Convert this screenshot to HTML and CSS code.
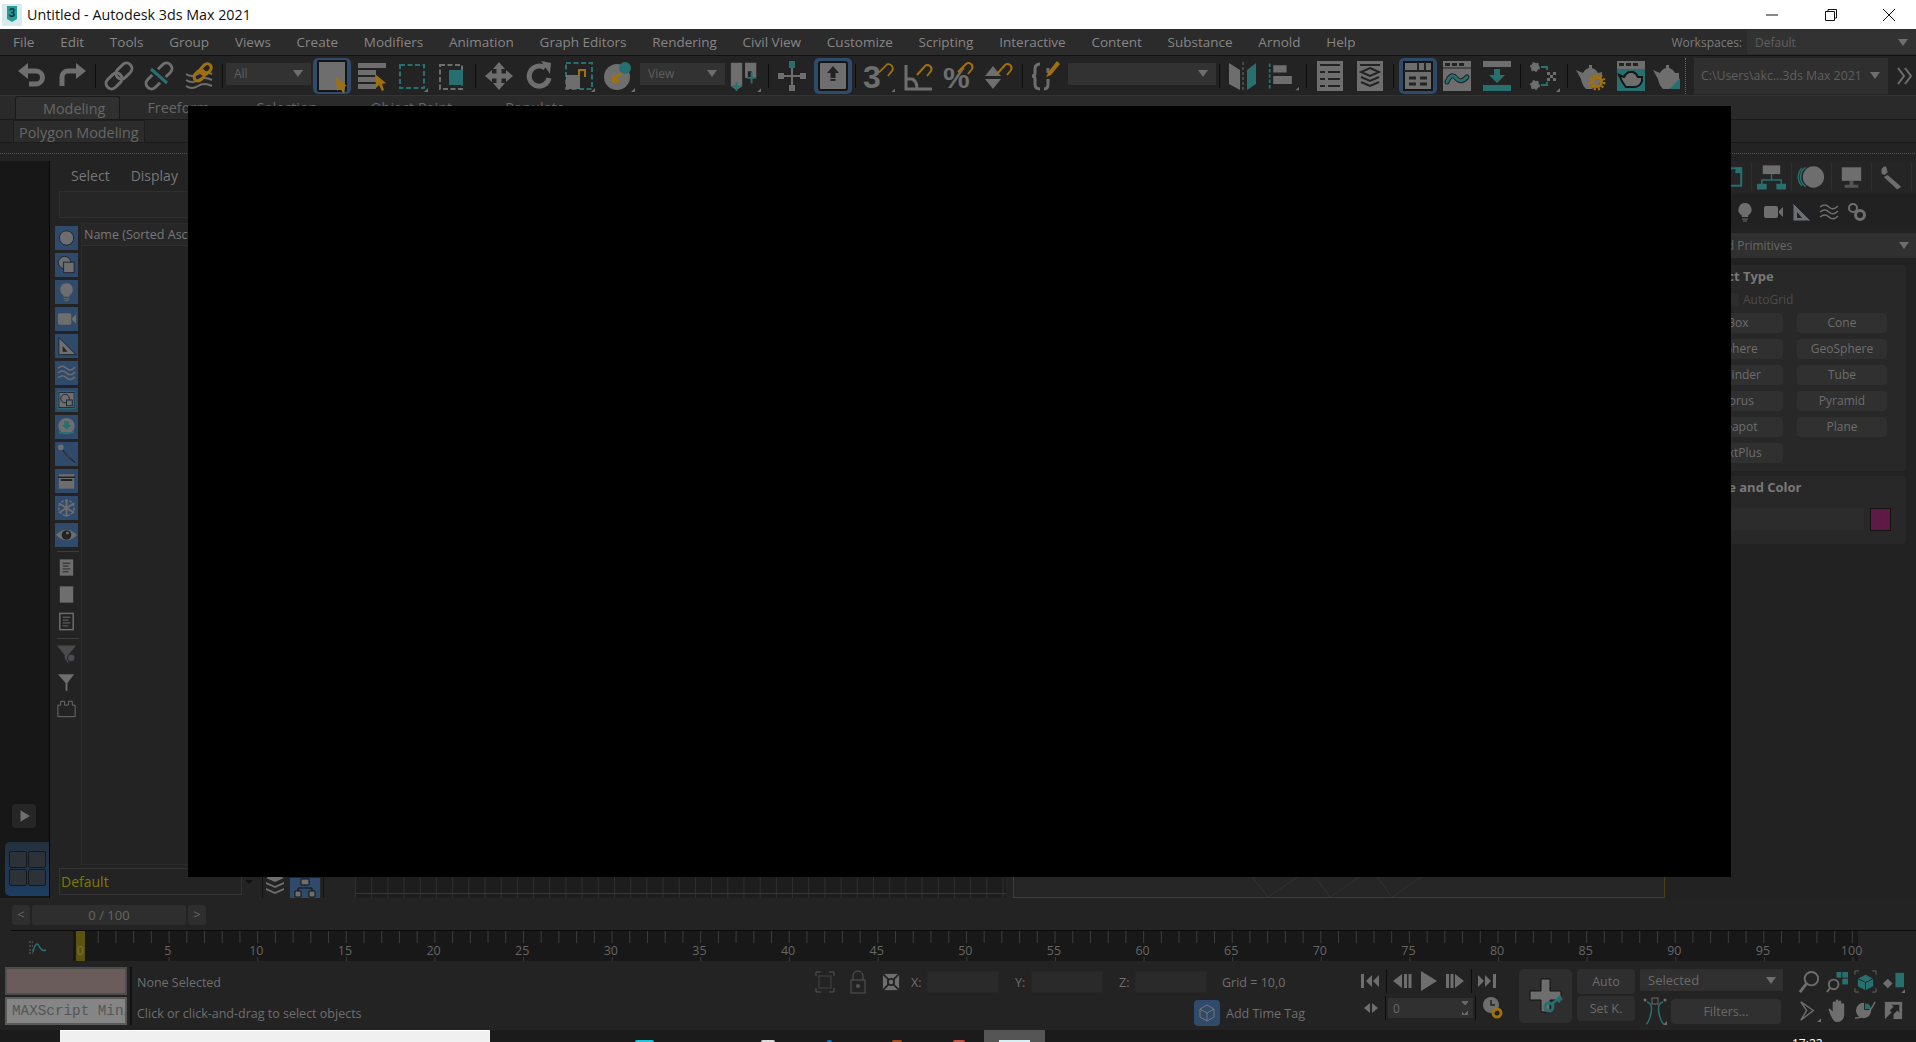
FILE: index.html
```html
<!DOCTYPE html>
<html lang="en">

<head>
    <meta charset="UTF-8">
    <title>Untitled - Autodesk 3ds Max 2021</title>
    <link rel="stylesheet" href="styles.css">
</head>

<body>
    <svg class="defs" xmlns="http://www.w3.org/2000/svg">
        <symbol id="i-undo" viewBox="0 0 32 32"><path class="sg w5" d="M12 11H20a6.5 6.5 0 0 1 0 13H13"/><path class="g" d="M2 11 12 3V19Z"/></symbol>
        <symbol id="i-redo" viewBox="0 0 32 32"><path class="sg w5" d="M6 26V17a6 6 0 0 1 6-6H20"/><path class="g" d="M30 11 20 3V19Z"/></symbol>
        <symbol id="i-link" viewBox="0 0 32 32"><g class="sg w3" transform="rotate(-45 16 16)"><rect x="0" y="10.500" width="18" height="11" rx="5.500"/><rect x="14" y="10.500" width="18" height="11" rx="5.500"/></g></symbol>
        <symbol id="i-unlink" viewBox="0 0 32 32"><g class="sg w3" transform="rotate(-45 16 16)"><path d="M12 10.500H5.500a5.500 5.500 0 0 0 0 11H12"/><path d="M20 10.500H26.500a5.500 5.500 0 0 1 0 11H20"/></g><path class="st w3" d="M8 9 24 23"/></symbol>
        <symbol id="i-bind" viewBox="0 0 32 32"><path class="sg w2" d="M3 14q6 4 12 0t14 0M3 20q6 4 12 0t14 0M3 26q6 4 12 0t14 0"/><g class="so w3" transform="rotate(-45 20 12)"><rect x="9" y="8" width="12" height="8" rx="4"/><rect x="18" y="8" width="12" height="8" rx="4"/></g></symbol>
        <symbol id="i-select" viewBox="0 0 36 36"><rect class="g dk" x="4" y="3" width="28" height="30" rx="1"/><path class="o" d="M22 19 23 33 26 30 29 35 31 34 29 29 33 28Z"/></symbol>
        <symbol id="i-selname" viewBox="0 0 32 32"><path class="g" d="M2 3H30V8H2ZM2 10H20V15H2ZM2 17H20V22H2ZM2 24H20V29H2Z"/><path class="o" d="M19 14 20 28 23 25 26 31 28 30 26 24 30 23Z"/></symbol>
        <symbol id="i-rect" viewBox="0 0 32 32"><rect class="st w2 dash" x="4" y="5" width="24" height="23"/><path class="g" d="M32 32V28L28 32Z"/></symbol>
        <symbol id="i-window" viewBox="0 0 32 32"><rect class="sg w2 dash" x="4" y="5" width="22" height="24"/><rect class="t" x="13" y="10" width="14" height="15"/></symbol>
        <symbol id="i-move" viewBox="0 0 32 32"><path class="g" d="M16 2 22 9H18.500V13.500H23V10L30 16 23 22V18.500H18.500V23H22L16 30 10 23H13.500V18.500H9V22L2 16 9 10V13.500H13.500V9H10Z"/></symbol>
        <symbol id="i-rotate" viewBox="0 0 32 32"><path class="sg w5" d="M22 8A10 10 0 1 0 26 18"/><path class="g" d="M18 1 28 3 27 14Z"/></symbol>
        <symbol id="i-scale" viewBox="0 0 32 32"><rect class="st w2 dash" x="3" y="3" width="26" height="26"/><rect class="g" x="3" y="15" width="14" height="14"/><path class="o" d="M15 15V9H23V17H21V11H17V15Z"/><path class="g" d="M32 32V28L28 32Z"/></symbol>
        <symbol id="i-place" viewBox="0 0 32 32"><circle class="g" cx="14" cy="17" r="13"/><circle class="t" cx="22" cy="8" r="6"/><path class="so w3" d="M10 21 18 13M10 15V21H16"/><path class="g" d="M32 32V28L28 32Z"/></symbol>
        <symbol id="i-pivot" viewBox="0 0 34 34"><path class="g" d="M2 3H14V28L8 32 2 28ZM17 3H29V18H24V12H20V19H17Z"/><path class="st w2" d="M8 23V33M3 28H13M24 13V25M19 19H29"/><path class="g" d="M34 34V30L30 34Z"/></symbol>
        <symbol id="i-axis" viewBox="0 0 32 32"><path class="sg w2" d="M16 8V26M4 16H28"/><rect class="t" x="13" y="1" width="6" height="7"/><rect class="g" x="2" y="13" width="6" height="6"/><rect class="g" x="24" y="13" width="6" height="6"/><rect class="g" x="13" y="25" width="6" height="6"/></symbol>
        <symbol id="i-manip" viewBox="0 0 36 36"><rect class="g dk" x="4" y="4" width="28" height="28" rx="2"/><path class="dkf" d="M18 8 24 15H20.500V20H15.500V15H12Z"/><rect class="dkf" x="15.500" y="21" width="5" height="2"/></symbol>
        <symbol id="i-snap3" viewBox="0 0 36 36"><text class="big3" x="0" y="31">3</text><path class="so w2" d="M18 14 27 5a5 5 0 0 1 6 7L28 18"/><path class="g" d="M36 36V32L32 36Z"/></symbol>
        <symbol id="i-angle" viewBox="0 0 32 32"><path class="sg w3" d="M3 5V29H29M3 19H9Q14 21 14 29"/><path class="so w2" d="M14 15 22 6a4 4 0 0 1 6 5L24 16"/></symbol>
        <symbol id="i-percent" viewBox="0 0 32 32"><text class="pct" x="0" y="28">%</text><path class="so w2" d="M15 12 23 4a4 4 0 0 1 6 5L25 14"/></symbol>
        <symbol id="i-spin" viewBox="0 0 32 32"><path class="g" d="M10 6 18 16H2ZM2 19H18L10 29Z"/><path class="so w2" d="M14 14 22 5a4 4 0 0 1 6 5L24 15"/></symbol>
        <symbol id="i-named" viewBox="0 0 32 32"><path class="sg w3" d="M10 4Q5 4 5 9V13Q5 16 2 16 5 16 5 19V24Q5 29 10 29M18 8V13M18 19V24Q18 29 14 29"/><path class="o" d="M16 17 19 11 27 1 30 4 21 15Z"/></symbol>
        <symbol id="i-mirror" viewBox="0 0 32 32"><path class="g" d="M2 3 13 10V30L2 24Z"/><path class="t" d="M29 3 20 10V30L29 24Z"/><path class="sg w1" d="M16 2V32" stroke-dasharray="3 2"/></symbol>
        <symbol id="i-align" viewBox="0 0 36 32"><path class="st w2" d="M3 2V30" stroke-dasharray="4 2"/><path class="g" d="M7 4H22V12H7ZM7 16H28V25H7Z"/><path class="g" d="M36 32V28L32 32Z"/></symbol>
        <symbol id="i-layer" viewBox="0 0 32 32"><rect class="g" x="3" y="1" width="26" height="30"/><path class="dks w2" d="M6 5H26M6 12H11M14 12H26M6 19H11M14 19H26M6 26H11M14 26H26"/></symbol>
        <symbol id="i-ribbon" viewBox="0 0 32 32"><rect class="g" x="3" y="1" width="26" height="30"/><path class="dks w2" d="M6 5H26M16 8 25 12 16 16 7 12ZM7 17 16 21 25 17M7 22 16 26 25 22"/></symbol>
        <symbol id="i-table" viewBox="0 0 36 36"><path class="g dk" d="M4 4H32V32H4Z"/><path class="dks w2" d="M18 4V13H32M25 4V13M4 13H18"/><path class="dks w3" d="M9 20H16M20 20H27M9 26H16M20 26H27"/></symbol>
        <symbol id="i-curve" viewBox="0 0 32 32"><rect class="g" x="2" y="1" width="28" height="30"/><path class="dks w1" d="M2 8H30"/><path class="dkf" d="M4 3H9V6H4ZM11 3H16V6H11ZM18 3H23V6H18Z"/><path class="dks w5 round" d="M6 22Q10 12 15 18T26 17"/><path class="st w3 round" d="M6 22Q10 12 15 18T26 17"/></symbol>
        <symbol id="i-dope" viewBox="0 0 32 32"><rect class="g" x="2" y="1" width="28" height="6"/><rect class="t" x="2" y="25" width="28" height="6"/><path class="t" d="M13 9H19V15H24L16 23 8 15H13Z"/></symbol>
        <symbol id="i-schem" viewBox="0 0 32 32"><circle class="g dash2s" cx="7" cy="7" r="4"/><circle class="g dash2s" cx="7" cy="25" r="4"/><path class="st w2" d="M13 7H19V10M13 25H19V22"/><path class="g" d="M19 12H22V15H19ZM22 15H25V18H22ZM19 18H22V21H19ZM25 12H28V15H25ZM25 18H28V21H25Z"/><path class="g" d="M32 32V28L28 32Z"/></symbol>
        <symbol id="i-setup" viewBox="0 0 32 32"><path class="g" d="M1 10 8 13Q10 9 14 8V5H17V8Q21 9 23 13L27 12V18Q25 26 17 29H11Q7 25 6 19Z"/><circle class="so w3 dash2" cx="22" cy="22" r="7"/><circle class="so w3" cx="22" cy="22" r="4.500"/></symbol>
        <symbol id="i-frame" viewBox="0 0 32 32"><rect class="g" x="2" y="1" width="28" height="8"/><path class="dkf" d="M4 3H9V6H4ZM11 3H16V6H11ZM18 3H23V6H18Z"/><rect class="t" x="2" y="9" width="28" height="22"/><path class="g dk" d="M4 15 9 17Q11 13 14 12H18Q21 13 23 17H27V21Q25 27 19 27H11Q7 22 6 19Z"/></symbol>
        <symbol id="i-render" viewBox="0 0 32 32"><path class="g" d="M1 10 8 13Q10 9 14 8V5H17V8Q21 9 23 13H27V20Q25 27 17 29H11Q7 25 6 19Z"/><path class="t" d="M18 29 28 18V29Z"/></symbol>
        <symbol id="i-play" viewBox="0 0 12 12"><path class="g" d="M3 1 11 6 3 11Z"/></symbol>
        <symbol id="r-sphere" viewBox="0 0 24 24"><circle class="g dkt" cx="12" cy="12" r="7.500"/></symbol>
        <symbol id="r-shape" viewBox="0 0 24 24"><circle class="g dkt" cx="10" cy="9.500" r="6.500"/><rect class="g dkt" x="9" y="9" width="11" height="11"/></symbol>
        <symbol id="r-light" viewBox="0 0 24 24"><path class="g" d="M12 3a6.500 6.500 0 0 1 3.500 12L15 17H9L8.500 15A6.500 6.500 0 0 1 12 3Z"/><path class="sg w1" d="M9 19H15M10 21H14"/></symbol>
        <symbol id="r-camera" viewBox="0 0 24 24"><rect class="g" x="3" y="6" width="14" height="12" rx="2"/><path class="g" d="M18 11 22 7V17L18 13Z"/></symbol>
        <symbol id="r-helper" viewBox="0 0 24 24"><path class="g dkt" d="M4 3 22 21H4Z"/><path class="dkf" d="M8 12 13 18H8Z"/></symbol>
        <symbol id="r-waves" viewBox="0 0 24 24"><path class="sg w1h" d="M3 7q5 -4 9 0t9 -1M3 12q5 -4 9 0t9 -1M3 17q5 -4 9 0t9 -1"/></symbol>
        <symbol id="r-stack" viewBox="0 0 24 24"><path class="g" d="M12 2 21 6 12 10 3 6ZM3 10 12 14 21 10V12L12 16 3 12ZM3 16 12 20 21 16V18L12 22 3 18Z"/></symbol>
        <symbol id="r-group" viewBox="0 0 24 24"><rect class="g dkt" x="4" y="4" width="16" height="16"/><rect class="st w1" x="3" y="3" width="18" height="18"/><circle class="g dkt" cx="10.500" cy="10.500" r="4.500"/><rect class="g dkt" x="12" y="12" width="6" height="6"/></symbol>
        <symbol id="r-xref" viewBox="0 0 24 24"><circle class="g" cx="12" cy="11" r="8.500"/><path class="t" d="M9.500 6H14.500V10H17L12 14.500 7 10H9.500Z"/><path class="st w1h" d="M5 15V18H19V15"/></symbol>
        <symbol id="r-bone" viewBox="0 0 24 24"><circle class="g" cx="6" cy="5" r="3"/><path class="g dkt" d="M8 8 21 21 13 15Z"/></symbol>
        <symbol id="r-box" viewBox="0 0 24 24"><rect class="g" x="4" y="5" width="16" height="15"/><path class="dks w1h" d="M3 8H21M7 11H17"/><rect class="dkf" x="6" y="10" width="12" height="2"/></symbol>
        <symbol id="r-flake" viewBox="0 0 24 24"><circle class="sg w1h" cx="12" cy="12" r="8" stroke-dasharray="3 1.500"/><path class="sg w2" d="M12 3V21M4 7 20 17M4 17 20 7"/></symbol>
        <symbol id="r-eye" viewBox="0 0 24 24"><path class="g" d="M1 12Q12 1 23 12 12 23 1 12Z"/><circle class="dkf" cx="12" cy="12" r="5"/><circle class="g" cx="13" cy="10" r="1.500"/></symbol>
        <symbol id="r-doc" viewBox="0 0 24 24"><rect class="g" x="5" y="3" width="14" height="17"/><path class="dks w1" d="M8 7H16M8 10H14M8 13H16M8 16H14"/></symbol>
        <symbol id="r-blank" viewBox="0 0 24 24"><rect class="g" x="5" y="3" width="14" height="17"/></symbol>
        <symbol id="r-doc2" viewBox="0 0 24 24"><rect class="sg w1h" x="5" y="3" width="14" height="17"/><path class="sg w1" d="M8 7H16M8 10H14M8 13H16M8 16H14"/></symbol>
        <symbol id="r-filter1" viewBox="0 0 24 24"><path class="dim" d="M2 2H22L14 12V21L10 15V12Z"/><circle class="dim dkt" cx="17" cy="15" r="4"/></symbol>
        <symbol id="r-filter2" viewBox="0 0 24 24"><path class="g" d="M3 4H20L13 13V21H11V13Z"/></symbol>
        <symbol id="r-lego" viewBox="0 0 24 24"><path class="sg w1" d="M3 20V8H6V4H10V8H14V4H18V8H21V20Z"/></symbol>
    </svg>

    <header class="titlebar">
        <svg class="app-icon" viewBox="0 0 20 22"><rect width="20" height="22" fill="#d9ecec"/><path d="M5 2H15V15L10 18 5 15Z" fill="#2a9a9b"/><text x="10" y="13" class="app-3">3</text></svg>
        <span class="title-text">Untitled - Autodesk 3ds Max 2021</span>
        <div class="win-btns">
            <svg viewBox="0 0 14 14"><path d="M1 7H13" stroke="#111" fill="none"/></svg>
            <svg viewBox="0 0 14 14"><path d="M1.500 3.500H10.500V12.500H1.500ZM4 3.500V1.500H12.500V10H10.500" stroke="#111" fill="none"/></svg>
            <svg viewBox="0 0 14 14"><path d="M1 1 13 13M13 1 1 13" stroke="#111" fill="none"/></svg>
        </div>
    </header>

    <nav class="menubar">
        <div class="menu">
            <span>File</span><span>Edit</span><span>Tools</span><span>Group</span><span>Views</span><span>Create</span><span>Modifiers</span><span>Animation</span><span>Graph Editors</span><span>Rendering</span><span>Civil View</span><span>Customize</span><span>Scripting</span><span>Interactive</span><span>Content</span><span>Substance</span><span>Arnold</span><span>Help</span>
        </div>
        <div class="workspace-pick">
            <span class="ws-label">Workspaces:</span>
            <div class="combo ws-combo"><span>Default</span><i class="arrow"></i></div>
        </div>
    </nav>

    <div class="toolbar">
        <div class="tool"><svg class="ic"><use href="#i-undo"/></svg></div>
        <div class="tool"><svg class="ic"><use href="#i-redo"/></svg></div>
        <div class="sep"></div>
        <div class="tool"><svg class="ic"><use href="#i-link"/></svg></div>
        <div class="tool"><svg class="ic"><use href="#i-unlink"/></svg></div>
        <div class="tool"><svg class="ic"><use href="#i-bind"/></svg></div>
        <div class="sep"></div>
        <div class="combo tb-combo w-85"><span>All</span><i class="arrow"></i></div>
        <div class="tool-on ml-2"><svg class="ic36"><use href="#i-select"/></svg></div>
        <div class="tool ml-1"><svg class="ic"><use href="#i-selname"/></svg></div>
        <div class="tool"><svg class="ic"><use href="#i-rect"/></svg></div>
        <div class="tool"><svg class="ic"><use href="#i-window"/></svg></div>
        <div class="sep"></div>
        <div class="tool"><svg class="ic"><use href="#i-move"/></svg></div>
        <div class="tool"><svg class="ic"><use href="#i-rotate"/></svg></div>
        <div class="tool"><svg class="ic"><use href="#i-scale"/></svg></div>
        <div class="tool"><svg class="ic"><use href="#i-place"/></svg></div>
        <div class="combo tb-combo w-85 ml-1"><span>View</span><i class="arrow"></i></div>
        <div class="tool"><svg class="ic"><use href="#i-pivot"/></svg></div>
        <div class="sep"></div>
        <div class="tool"><svg class="ic"><use href="#i-axis"/></svg></div>
        <div class="tool-on ml-2"><svg class="ic36"><use href="#i-manip"/></svg></div>
        <div class="sep"></div>
        <div class="tool"><svg class="ic"><use href="#i-snap3"/></svg></div>
        <div class="tool"><svg class="ic"><use href="#i-angle"/></svg></div>
        <div class="tool"><svg class="ic"><use href="#i-percent"/></svg></div>
        <div class="tool"><svg class="ic"><use href="#i-spin"/></svg></div>
        <div class="sep"></div>
        <div class="tool"><svg class="ic"><use href="#i-named"/></svg></div>
        <div class="combo tb-combo w-148 ml-2"><span></span><i class="arrow"></i></div>
        <div class="sep"></div>
        <div class="tool"><svg class="ic"><use href="#i-mirror"/></svg></div>
        <div class="tool"><svg class="ic"><use href="#i-align"/></svg></div>
        <div class="sep"></div>
        <div class="tool"><svg class="ic"><use href="#i-layer"/></svg></div>
        <div class="tool"><svg class="ic"><use href="#i-ribbon"/></svg></div>
        <div class="sep"></div>
        <div class="tool-on ml-2"><svg class="ic36"><use href="#i-table"/></svg></div>
        <div class="tool"><svg class="ic"><use href="#i-curve"/></svg></div>
        <div class="tool"><svg class="ic"><use href="#i-dope"/></svg></div>
        <div class="sep"></div>
        <div class="tool"><svg class="ic"><use href="#i-schem"/></svg></div>
        <div class="sep"></div>
        <div class="tool"><svg class="ic"><use href="#i-setup"/></svg></div>
        <div class="tool"><svg class="ic"><use href="#i-frame"/></svg></div>
        <div class="tool tool-narrow"><svg class="ic"><use href="#i-render"/></svg></div>
        <div class="vgrip"></div>
        <div class="combo path-combo"><span>C:\Users\akc...3ds Max 2021</span><i class="arrow"></i></div>
        <svg class="more" viewBox="0 0 16 18"><path d="M1 1 7 9 1 17M8 1 14 9 8 17" fill="none" stroke="#6e6e6e" stroke-width="2"/></svg>
    </div>

    <section class="ribbon">
        <div class="ribbon-tabs">
            <span class="r-tab active">Modeling</span>
            <span class="r-tab r-tab-free">Freeform</span>
            <span class="r-tab">Selection</span>
            <span class="r-tab">Object Paint</span>
            <span class="r-tab">Populate</span>
        </div>
        <div class="ribbon-sub"><span class="poly">Polygon Modeling</span></div>
    </section>

    <main class="work">
        <aside class="rail">
            <div class="dot-strip"></div>
            <div class="rail-play"><svg class="i12"><use href="#i-play"/></svg></div>
            <div class="vp-layout"><i></i><i></i><i></i><i></i></div>
        </aside>

        <div class="center">
            <div class="dot-strip"></div>
            <div class="explorer">
                <div class="ex-tabs"><span>Select</span><span>Display</span></div>
                <div class="ex-search"></div>
                <div class="ex-body">
                    <div class="ex-icons">
                        <svg class="r on"><use href="#r-sphere"/></svg>
                        <svg class="r on"><use href="#r-shape"/></svg>
                        <svg class="r on"><use href="#r-light"/></svg>
                        <svg class="r on"><use href="#r-camera"/></svg>
                        <svg class="r on"><use href="#r-helper"/></svg>
                        <svg class="r on"><use href="#r-waves"/></svg>
                        <svg class="r on"><use href="#r-group"/></svg>
                        <svg class="r on"><use href="#r-xref"/></svg>
                        <svg class="r on"><use href="#r-bone"/></svg>
                        <svg class="r on"><use href="#r-box"/></svg>
                        <svg class="r on"><use href="#r-flake"/></svg>
                        <svg class="r on"><use href="#r-eye"/></svg>
                        <div class="r-sep"></div>
                        <svg class="r"><use href="#r-doc"/></svg>
                        <svg class="r"><use href="#r-blank"/></svg>
                        <svg class="r"><use href="#r-doc2"/></svg>
                        <div class="r-sep"></div>
                        <svg class="r"><use href="#r-filter1"/></svg>
                        <svg class="r"><use href="#r-filter2"/></svg>
                        <svg class="r"><use href="#r-lego"/></svg>
                    </div>
                    <div class="ex-list"><div class="ex-head">Name (Sorted Ascending)</div></div>
                </div>
            </div>
            <div class="layer-row">
                <div class="layer-combo">Default</div>
                <i class="mini-arrow"></i>
                <div class="thin-sep"></div>
                <svg class="r layer-ic"><use href="#r-stack"/></svg>
                <svg class="tag-btn" viewBox="0 0 30 20"><rect width="30" height="20" fill="#304a6b"/><path d="M15 3V8M8 14V10H22V14" stroke="#111" fill="none"/><path d="M11 1H19V7H11ZM5 13H11V19H5ZM19 13H25V19H19Z" fill="#6e6e6e" stroke="#111"/></svg>
                <div class="thin-sep"></div>
                <div class="tracks"></div>
                <div class="keybox">
                    <svg viewBox="0 0 650 21" preserveAspectRatio="none"><path d="M232 0 254 21M254 21 295 0 316 21 357 0 378 21 419 0" fill="none" stroke="#2f2f2f"/></svg>
                </div>
            </div>
        </div>

        <aside class="cmd">
            <div class="dot-strip"></div>
            <div class="cmd-tabs">
                <svg class="ct" viewBox="0 0 32 28"><rect x="6" y="5" width="20" height="18" fill="none" stroke="#27706f" stroke-width="2"/><path d="M20 4H27V10H20Z" fill="#27706f"/></svg>
                <svg class="ct" viewBox="0 0 32 28"><path d="M7 2H25V11H7Z" fill="#6e6e6e"/><path d="M16 11V17M6 22V17H26V22" stroke="#27706f" stroke-width="1.500" fill="none"/><path d="M1 21H11V27H1ZM21 21H31V27H21Z" fill="#27706f"/></svg>
                <svg class="ct" viewBox="0 0 32 28"><circle cx="18" cy="14" r="11" fill="#6e6e6e"/><path d="M10 4A12 12 0 0 0 10 24M6 5A13 13 0 0 0 6 23" stroke="#27706f" stroke-width="1.500" fill="none"/></svg>
                <svg class="ct" viewBox="0 0 32 28"><path d="M6 4H26V18H6Z" fill="#6e6e6e"/><path d="M14 18H18V22H23V25H9V22H14Z" fill="#555"/></svg>
                <svg class="ct" viewBox="0 0 32 28"><path d="M10 3Q4 4 6 11L9 12 12 9 11 5ZM12 12 8 14 22 27 26 24Z" fill="#6e6e6e"/></svg>
            </div>
            <div class="cmd-sub">
                <svg class="cs"><use href="#r-sphere"/></svg>
                <svg class="cs"><use href="#r-shape"/></svg>
                <svg class="cs"><use href="#r-light"/></svg>
                <svg class="cs"><use href="#r-camera"/></svg>
                <svg class="cs"><use href="#r-helper"/></svg>
                <svg class="cs"><use href="#r-waves"/></svg>
                <svg class="cs" viewBox="0 0 24 24"><circle cx="8" cy="8" r="4" fill="none" stroke="#6e6e6e" stroke-width="2"/><circle cx="15" cy="15" r="4.500" fill="none" stroke="#6e6e6e" stroke-width="3"/></svg>
            </div>
            <div class="combo prim-combo"><span>Standard Primitives</span><i class="arrow"></i></div>

            <div class="rollout">
                <div class="ro-head"><b>Object Type</b><i class="ro-grip"></i></div>
                <label class="autogrid"><i class="chk"></i>AutoGrid</label>
                <div class="prim-grid">
                    <span>Box</span><span>Cone</span>
                    <span>Sphere</span><span>GeoSphere</span>
                    <span>Cylinder</span><span>Tube</span>
                    <span>Torus</span><span>Pyramid</span>
                    <span>Teapot</span><span>Plane</span>
                    <span>TextPlus</span>
                </div>
            </div>
            <div class="rollout rollout-name">
                <div class="ro-head"><b>Name and Color</b><i class="ro-grip"></i></div>
                <div class="name-row"><div class="name-input"></div><div class="swatch"></div></div>
            </div>
        </aside>
    </main>

    <div class="slider-row">
        <span class="sl-btn">&lt;</span>
        <span class="sl-track">0 / 100</span>
        <span class="sl-btn">&gt;</span>
    </div>

    <div class="timeline">
        <div class="tl-icon">
            <svg viewBox="0 0 20 16"><path d="M1 3H5M1 7H5M1 11H5M1 14H5" stroke="#666" stroke-dasharray="2 1"/><path d="M5 13Q8 1 11 7T18 11" stroke="#27706f" stroke-width="1.500" fill="none"/></svg>
        </div>
        <div class="ruler">
            <span class="cur-frame">0</span>
            <div class="ruler-labels" id="labels"></div>
        </div>
    </div>

    <footer class="status">
        <div class="mini">
            <div class="mini-top"></div>
            <div class="mini-bot">MAXScript Mini</div>
        </div>
        <div class="stat-sep"></div>
        <div class="stat-mid">
            <div class="stat-line">
                <span>None Selected</span>
                <div class="coords">
                    <svg class="c-ic" viewBox="0 0 20 24"><path d="M1 6V2H6M14 2H19V6M1 18V22H6M14 22H19V18" fill="none" stroke="#555"/><rect x="4" y="6" width="12" height="12" fill="none" stroke="#444"/></svg>
                    <svg class="c-ic" viewBox="0 0 20 24"><path d="M5 10V6a5 5 0 0 1 10 0V10" fill="none" stroke="#555"/><rect x="3" y="10" width="14" height="13" fill="none" stroke="#555"/><circle cx="10" cy="16" r="2" fill="#555"/></svg>
                    <svg class="c-ic c-abs" viewBox="0 0 20 20"><rect width="18" height="18" x="1" y="1" fill="#6e6e6e"/><path d="M1 1 7 7M19 1 13 7M1 19 7 13M19 19 13 13" stroke="#222" stroke-width="2"/><circle cx="10" cy="10" r="3.500" fill="none" stroke="#222" stroke-width="2"/></svg>
                    <span class="ax">X:</span><div class="coord-in"></div>
                    <span class="ax">Y:</span><div class="coord-in"></div>
                    <span class="ax">Z:</span><div class="coord-in"></div>
                    <span class="grid-val">Grid = 10,0</span>
                </div>
            </div>
            <div class="stat-line">
                <span>Click or click-and-drag to select objects</span>
                <div class="tagline">
                    <svg class="tag-ic" viewBox="0 0 26 26"><rect width="26" height="26" rx="4" fill="#304a6b"/><path d="M13 5 20 9V17L13 21 6 17V9ZM6 9 13 13 20 9M13 13V21" fill="none" stroke="#777"/></svg>
                    <span>Add Time Tag</span>
                </div>
            </div>
        </div>

        <div class="transport">
            <div class="tr-row">
                <svg class="tr" viewBox="0 0 20 18"><path d="M1 2H4V16H1ZM12 3V15L6 9ZM19 3V15L13 9Z" fill="#6e6e6e"/></svg>
                <div class="tr-sep"></div>
                <svg class="tr" viewBox="0 0 20 18"><path d="M10 2V16L1 9ZM12 2H15V16H12ZM16.500 2H19.500V16H16.500Z" fill="#6e6e6e"/></svg>
                <svg class="tr tr-play" viewBox="0 0 20 24"><path d="M2 2 18 12 2 22Z" fill="#6e6e6e"/></svg>
                <svg class="tr" viewBox="0 0 20 18"><path d="M1 2H4V16H1ZM5.500 2H8.500V16H5.500ZM10 2 19 9 10 16Z" fill="#6e6e6e"/></svg>
                <div class="tr-sep"></div>
                <svg class="tr" viewBox="0 0 20 18"><path d="M1 3 7 9 1 15ZM8 3 14 9 8 15ZM16 2H19V16H16Z" fill="#6e6e6e"/></svg>
            </div>
            <div class="tr-row tr-row2">
                <svg class="tr-k" viewBox="0 0 18 14"><path d="M8 2V12L2 7ZM10 2 16 7 10 12Z" fill="#6e6e6e"/></svg>
                <div class="tr-sep"></div>
                <div class="frame-in"><span>0</span><i class="updown"></i></div>
                <div class="tr-sep"></div>
                <svg class="tr-k cfg" viewBox="0 0 22 24"><circle cx="9" cy="9" r="8" fill="#6e6e6e"/><path d="M9 4V9H13" stroke="#222" stroke-width="1.500" fill="none"/><circle cx="15" cy="17" r="4" fill="none" stroke="#a0700f" stroke-width="3"/></svg>
            </div>
        </div>

        <div class="bigkey">
            <svg viewBox="0 0 36 40"><path d="M13 3H22V15H33V24H22V36H13V24H2V15H13Z" fill="#6e6e6e" stroke="#111"/><circle cx="21" cy="31" r="4" fill="none" stroke="#27706f" stroke-width="3"/><path d="M24 28 33 20M29 23 32 26M31 21 34 24" stroke="#27706f" stroke-width="2.500" fill="none"/></svg>
        </div>
        <div class="key-btns"><span>Auto</span><span>Set K.</span></div>
        <div class="key-side">
            <div class="combo sel-combo"><span>Selected</span><i class="arrow"></i></div>
            <div class="filter-row">
                <svg class="tan" viewBox="0 0 24 28"><path d="M4 5Q10 6 8 16T3 27M20 5Q14 6 16 16T21 27" fill="none" stroke="#27706f" stroke-width="1.500"/><rect x="9" y="1" width="6" height="6" fill="none" stroke="#6e6e6e"/><circle cx="2" cy="3" r="1.500" fill="#6e6e6e"/><circle cx="22" cy="3" r="1.500" fill="#6e6e6e"/><path d="M24 28V24L20 28Z" fill="#6e6e6e"/></svg>
                <span class="filters">Filters...</span>
            </div>
        </div>
        <div class="nav-grid">
            <svg viewBox="0 0 24 24"><circle cx="14" cy="9" r="7" fill="none" stroke="#6e6e6e" stroke-width="2"/><path d="M9 14 2 23" stroke="#6e6e6e" stroke-width="3"/></svg>
            <svg viewBox="0 0 24 24"><circle cx="8" cy="15" r="5" fill="none" stroke="#6e6e6e" stroke-width="2"/><path d="M4 19 1 23" stroke="#6e6e6e" stroke-width="2"/><path d="M11 2H16V8H11ZM17 2H23V8H17ZM17 9H23V15H17Z" fill="#27706f"/></svg>
            <svg viewBox="0 0 24 24"><path d="M12 5 20 9V17L12 21 4 17V9Z" fill="#27706f"/><path d="M4 9 12 13 20 9M12 13V21" stroke="#222" fill="none"/><path d="M1 5V1H5M19 1H23V5M1 19V23H5M19 23H23V19" stroke="#666" fill="none"/></svg>
            <svg viewBox="0 0 24 24"><path d="M1 14 6 9 11 14 6 19Z" fill="#6e6e6e"/><path d="M14 3H23V18H14Z" fill="#27706f"/><path d="M24 24V20L20 24Z" fill="#6e6e6e"/></svg>
            <svg viewBox="0 0 24 24"><path d="M16 12 3 3 9 12 3 22Z" fill="none" stroke="#6e6e6e" stroke-width="1.500"/><path d="M24 24V20L20 24Z" fill="#6e6e6e"/></svg>
            <svg viewBox="0 0 24 24"><path d="M3 12Q2 10 4 10L7 13V4a1.500 1.500 0 0 1 3 0V2a1.500 1.500 0 0 1 3 0V3a1.500 1.500 0 0 1 3 0V6a1.500 1.500 0 0 1 3 0V17Q18 24 11 24 7 24 3 12Z" fill="#6e6e6e"/></svg>
            <svg viewBox="0 0 24 24"><circle cx="10" cy="12" r="8" fill="#6e6e6e"/><path d="M11 4V11H18Q18 4 11 4Z" fill="#27706f" stroke="#222"/><path d="M1 20Q14 20 22 3" stroke="#6e6e6e" fill="none" stroke-width="1.500"/></svg>
            <svg viewBox="0 0 24 24"><path d="M3 3H21V21H3Z" fill="#6e6e6e"/><path d="M3 21 12 12V21Z" fill="#222"/><path d="M10 6H18V14L16 12 12 16 8 12 12 8Z" fill="#222"/></svg>
        </div>
    </footer>

    <div class="taskbar">
        <div class="tb-window"></div>
        <i class="tb-app cyan"></i>
        <i class="tb-app white"></i>
        <i class="tb-app blue"></i>
        <i class="tb-app orange"></i>
        <i class="tb-app red"></i>
        <div class="tb-active"><i></i></div>
        <span class="tb-clock">17:22</span>
    </div>

    <!-- dialog that was blacked out -->
    <div class="blackout"></div>

    <script>
        const labels = document.getElementById("labels");
        for (let f = 5; f <= 100; f += 5) {
            const s = document.createElement("span");
            s.textContent = f;
            labels.appendChild(s);
        }
    </script>
</body>

</html>
```

FILE: styles.css
```css
* {
    box-sizing: border-box;
}

html,
body {
    margin: 0;
    padding: 0;
    height: 1042px;
    overflow: hidden;
}

body {
    position: relative;
    display: flex;
    flex-direction: column;
    background: #232323;
    color: #7c7c7c;
    font-family: "Open Sans", "Noto Sans", sans-serif;
    font-size: 13px;
}

.defs {
    display: none;
}

/* icon paint */
.g { fill: #6e6e6e; }
.t { fill: #27706f; }
.o { fill: #a0700f; }
.dim { fill: #4b4b4b; }
.dkf { fill: #232323; }
.dk { stroke: #151515; stroke-width: 2; }
.dkt { stroke: #1c2533; stroke-width: 1; }
.sg { fill: none; stroke: #6e6e6e; }
.st { fill: none; stroke: #27706f; }
.so { fill: none; stroke: #a0700f; }
.dks { fill: none; stroke: #232323; }
.w1 { stroke-width: 1; }
.w1h { stroke-width: 1.5; }
.w2 { stroke-width: 2; }
.w3 { stroke-width: 3; }
.w5 { stroke-width: 5; }
.dash { stroke-dasharray: 5 2.5; }
.dash2 { stroke-dasharray: 2 2; }
.dash2s { stroke: #6e6e6e; stroke-width: 2; stroke-dasharray: 2 2; }
.round { stroke-linecap: round; }
.big3 { font: bold 36px "Liberation Sans", sans-serif; fill: #6e6e6e; }
.pct { font: bold 30px "Liberation Sans", sans-serif; fill: #6e6e6e; }

/* title bar */
.titlebar {
    flex: 0 0 29px;
    display: flex;
    align-items: center;
    background: #fff;
    color: #111;
    padding-left: 2px;
}

.app-icon {
    width: 20px;
    height: 22px;
}

.app-3 {
    font: bold 12px "Liberation Sans", sans-serif;
    fill: #0c3a3c;
    text-anchor: middle;
}

.title-text {
    margin-left: 5px;
    font-size: 14.3px;
}

.win-btns {
    margin-left: auto;
    display: flex;
    gap: 44.5px;
    padding-right: 20px;
}

.win-btns svg {
    width: 14px;
    height: 14px;
}

/* menu */
.menubar {
    flex: 0 0 27px;
    display: flex;
    align-items: center;
    justify-content: space-between;
    background: #2b2b2b;
    border-bottom: 1px solid #111;
    padding-left: 13px;
}

.menu {
    display: flex;
    gap: 25.76px;
    font-size: 13.5px;
    color: #868686;
}

.workspace-pick {
    display: flex;
    align-items: center;
    gap: 5px;
    font-size: 12px;
}

.ws-combo {
    width: 169px;
    height: 24px;
    background: #323232;
}

.combo {
    display: flex;
    align-items: center;
    justify-content: space-between;
    padding: 0 8px;
    color: #5f5f5f;
    font-size: 12px;
}

.arrow {
    width: 0;
    height: 0;
    border-left: 5px solid transparent;
    border-right: 5px solid transparent;
    border-top: 7px solid #6e6e6e;
}

/* main toolbar */
.toolbar {
    flex: 0 0 40px;
    display: flex;
    align-items: center;
    padding-left: 12px;
    background: #232323;
    border-bottom: 1px solid #333;
}

.tool {
    flex: 0 0 40px;
    height: 38px;
    display: flex;
    align-items: center;
    justify-content: center;
}

.tool-narrow {
    flex-basis: 33px;
}

.ic {
    width: 32px;
    height: 32px;
}

.ic36 {
    width: 36px;
    height: 36px;
}

.tool-on {
    flex: 0 0 38px;
    height: 36px;
    display: flex;
    align-items: center;
    justify-content: center;
    background: #304a6b;
    border-radius: 5px;
}

.ml-1 { margin-left: 1px; }
.ml-2 { margin-left: 2px; }

.sep {
    flex: 0 0 1px;
    height: 24px;
    margin: 0 3px;
    background: #0d0d0d;
}

.tb-combo {
    height: 22px;
    margin-top: -4px;
    background: #323232;
}

.w-85 { flex: 0 0 85px; }
.w-148 { flex: 0 0 148px; }

.vgrip {
    flex: 0 0 1px;
    height: 36px;
    margin: 0 8px 0 1px;
    border-left: 1px dotted #666;
}

.path-combo {
    flex: 0 0 194px;
    height: 36px;
    padding-left: 7px;
    background: #2f2f2f;
    font-size: 12.3px;
    white-space: nowrap;
}

.more {
    width: 16px;
    height: 18px;
    margin-left: 9px;
}

/* ribbon */
.ribbon {
    flex: 0 0 47px;
    background: #2a2a2a;
}

.ribbon-tabs {
    height: 24px;
    display: flex;
    padding-left: 15px;
    border-bottom: 1px solid #1a1a1a;
    font-size: 14.4px;
    color: #666;
}

.r-tab {
    padding: 2px 26px 0 27px;
    white-space: nowrap;
}

.r-tab-free {
    padding-right: 20px;
}

.r-tab.active {
    padding: 2px 14px 0 27px;
    background: #303030;
    border: 1px solid #1a1a1a;
    border-bottom: 0;
    border-radius: 3px 3px 0 0;
}

.ribbon-sub {
    height: 23px;
    background: #262626;
    border-bottom: 1px solid #1a1a1a;
    padding-left: 13px;
}

.poly {
    display: block;
    width: 132px;
    height: 23px;
    padding-left: 5px;
    background: #2c2c2c;
    border: 1px solid #1d1d1d;
    font-size: 14.4px;
    line-height: 23px;
    color: #666;
    white-space: nowrap;
}

/* work area */
.work {
    flex: 0 0 755px;
    display: flex;
    min-height: 0;
}

.rail {
    flex: 0 0 50px;
    display: flex;
    flex-direction: column;
    align-items: center;
    padding-bottom: 2px;
    background: #171717;
    border-right: 1px solid #060606;
}

.rail .dot-strip {
    align-self: stretch;
    margin-right: -1px;
}

.rail-play {
    width: 24px;
    height: 24px;
    margin-top: auto;
    margin-bottom: 14px;
    margin-right: 1px;
    display: flex;
    align-items: center;
    justify-content: center;
    background: #262626;
    border-radius: 4px;
}

.i12 {
    width: 14px;
    height: 14px;
}

.vp-layout {
    width: 44px;
    height: 54px;
    margin-left: 4px;
    padding: 9px 3px 10px 4px;
    display: grid;
    grid-template-columns: 1fr 1fr;
    gap: 1px;
    background: linear-gradient(#24303d, #1d3d63);
    border-radius: 5px 0 0 5px;
}

.vp-layout i {
    background: #2d3238;
    border: 1px solid #14181d;
    border-radius: 2px;
}

.center {
    flex: 1;
    min-width: 0;
    display: flex;
    flex-direction: column;
    background: #232323;
}

.dot-strip {
    flex: 0 0 18px;
    background: linear-gradient(90deg, #555 1px, transparent 1px) 0 10px / 2px 1px repeat-x, #232323;
}

.explorer {
    flex: 1;
    width: 300px;
    display: flex;
    flex-direction: column;
    min-height: 0;
    padding-left: 5px;
}

.ex-tabs {
    flex: 0 0 30px;
    display: flex;
    gap: 21px;
    padding: 5px 0 0 16px;
    font-size: 14px;
    color: #777;
}

.ex-search {
    flex: 0 0 27px;
    margin-left: 4px;
    background: #262626;
    border: 1px solid #2f2f2f;
}

.ex-body {
    flex: 1;
    display: flex;
    margin-top: 5px;
    min-height: 0;
}

.ex-icons {
    flex: 0 0 26px;
    padding-top: 3px;
    display: flex;
    flex-direction: column;
    gap: 3px;
}

.r {
    flex: 0 0 24px;
    width: 23px;
    height: 24px;
}

.r.on {
    background: #304a6b;
}

.r-sep {
    height: 1px;
    margin: 1px 2px;
    background: #3c3c3c;
}

.ex-list {
    flex: 1;
    margin-bottom: 3px;
    border: 1px solid #2b2b2b;
    border-bottom-color: #2b2b2b;
}

.ex-head {
    height: 22px;
    padding-left: 2px;
    font-size: 12.5px;
    line-height: 21px;
    color: #787878;
    background: #272727;
    border-bottom: 1px solid #2f2f2f;
    white-space: nowrap;
}

.layer-row {
    flex: 0 0 29px;
    display: flex;
    align-items: flex-end;
    padding-left: 9px;
}

.layer-combo {
    flex: 0 0 183px;
    height: 27px;
    margin-bottom: 3px;
    padding-left: 1px;
    border: 1px solid #343434;
    font-size: 14px;
    line-height: 25px;
    color: #7b7b00;
}

.mini-arrow {
    flex: 0 0 0;
    margin: 0 9px 14px 3px;
    border-left: 4px solid transparent;
    border-right: 4px solid transparent;
    border-top: 4px solid #111;
}

.thin-sep {
    flex: 0 0 1px;
    height: 27px;
    background: #111;
}

.layer-ic {
    margin: 0 3px 2px 0;
}

.tag-btn {
    flex: 0 0 30px;
    height: 20px;
    margin-right: 3px;
}

.tracks {
    flex: 0 0 651px;
    height: 29px;
    margin-left: 31px;
    background:
        linear-gradient(#383838, #383838) 0 24px / 100% 1px no-repeat,
        linear-gradient(90deg, #2f2f2f 1px, transparent 1px) 0 0 / 16.2px 100%,
        #1d1d1d;
}

.keybox {
    flex: 1;
    height: 29px;
    margin: 0 3px 0 7px;
    border: 1px solid #4a3d14;
    border-top: 0;
    background: #262626;
}

.keybox svg {
    display: block;
    width: 100%;
    height: 100%;
}

/* command panel */
.cmd {
    flex: 0 0 246px;
    display: flex;
    flex-direction: column;
    padding-left: 14px;
    background: #222;
}

.cmd > .dot-strip {
    margin-left: -14px;
}

.cmd-tabs {
    flex: 0 0 32px;
    display: flex;
    margin-left: -14px;
    padding-left: 44px;
    background: #252525;
}

.ct {
    flex: 0 0 40px;
    width: 40px;
    height: 28px;
    padding: 0 4px;
    margin-top: 2px;
    border-right: 1px solid #2f2f2f;
}

.cmd-sub {
    flex: 0 0 33px;
    display: flex;
    align-items: center;
    margin-left: -14px;
    padding-left: 7px;
    background: #212121;
    margin-top: 2px;
}

.cs {
    flex: 0 0 28px;
    width: 28px;
    height: 24px;
}

.prim-combo {
    flex: 0 0 25px;
    margin-top: 5px;
    margin-left: -14px;
    padding: 0 7px 0 15px;
    background: #303030;
    font-size: 12px;
    color: #666;
}

.rollout {
    margin: 7px 10px 0 0;
    padding: 0 19px 0 11px;
    height: 206px;
    background: #282828;
    border-radius: 3px;
}

.rollout-name {
    height: 68px;
    margin-top: 5px;
}

.ro-head {
    height: 22px;
    display: flex;
    align-items: center;
    justify-content: space-between;
    padding-left: 4px;
    font-size: 13px;
    color: #787878;
}

.ro-grip {
    width: 7px;
    height: 7px;
    margin-right: -12px;
    background: radial-gradient(#4a4a4a 40%, transparent 45%) 0 0 / 2px 2px;
}

.autogrid {
    display: flex;
    align-items: center;
    gap: 4px;
    height: 19px;
    margin: 3px 0 4px 33px;
    font-size: 12px;
    color: #4b4b4b;
}

.chk {
    width: 13px;
    height: 13px;
    background: #2d2d2d;
}

.prim-grid {
    display: grid;
    grid-template-columns: 90px 90px;
    grid-auto-rows: 20px;
    gap: 6px 14px;
}

.prim-grid span {
    text-align: center;
    background: #303030;
    border-radius: 4px;
    font-size: 12px;
    line-height: 20px;
    color: #6d6d6d;
}

.name-row {
    display: flex;
    gap: 6px;
    margin: 10px -4px 0 0;
}

.name-input {
    flex: 1;
    height: 22px;
    background: #2c2c2c;
}

.swatch {
    flex: 0 0 21px;
    height: 23px;
    background: #5d1a45;
    border: 1px solid #141414;
}

/* time slider */
.slider-row {
    flex: 0 0 32px;
    display: flex;
    align-items: center;
    gap: 2px;
    padding: 2px 0 0 12px;
    background: #232323;
    color: #666;
}

.sl-btn {
    width: 18px;
    height: 20px;
    text-align: center;
    line-height: 18px;
    background: #2e2e2e;
    border-radius: 3px;
    font-size: 13px;
}

.sl-track {
    width: 154px;
    height: 20px;
    text-align: center;
    line-height: 20px;
    font-size: 13px;
    background: #2e2e2e;
    border-radius: 3px;
}

.timeline {
    flex: 0 0 31px;
    display: flex;
    margin-left: 11px;
    border-top: 1px solid #0b0b0b;
}

.tl-icon {
    flex: 0 0 62px;
    padding: 8px 0 0 17px;
}

.tl-icon svg {
    width: 20px;
    height: 16px;
    display: block;
}

.ruler {
    width: 1785px;
    display: flex;
    background:
        linear-gradient(90deg, #3c3c3c 1px, transparent 1px) 7px 0 / 17.726px 12px repeat-x,
        linear-gradient(90deg, #3c3c3c 1px, transparent 1px) 7px 26px / 88.63px 5px repeat-x,
        #181818;
}

.cur-frame {
    flex: 0 0 9px;
    margin-left: 3px;
    padding-top: 11px;
    background: #5a5410;
    color: #7c7630;
    font-size: 12px;
    text-align: center;
    line-height: 18px;
}

.ruler-labels {
    display: flex;
    margin-left: 38.4px;
    padding-top: 11px;
    font-size: 12.5px;
    line-height: 18px;
    color: #666;
}

.ruler-labels span {
    flex: 0 0 88.63px;
    width: 88.63px;
    text-align: center;
}

/* status bar */
.status {
    flex: 0 0 69px;
    display: flex;
    padding-top: 6px;
    background: #232323;
}

.mini {
    flex: 0 0 122px;
    min-width: 0;
    margin-left: 5px;
    height: 58px;
    display: flex;
    flex-direction: column;
    gap: 2px;
}

.mini-top {
    flex: 0 0 28px;
    background: #6b5c5c;
    border: 2px solid #4d4d4d;
}

.mini-bot {
    flex: 1;
    overflow: hidden;
    padding: 2px 5px;
    background: #858585;
    border: 2px solid #5b5b5b;
    font: 14.3px/20px "Liberation Mono", monospace;
    color: #555;
    white-space: nowrap;
}

.stat-sep {
    flex: 0 0 2px;
    height: 58px;
    margin: 0 5px 0 3px;
    background: #111;
}

.stat-mid {
    flex: 0 0 1218px;
    display: flex;
    flex-direction: column;
    color: #6f6f6f;
    font-size: 12.5px;
}

.stat-line {
    display: flex;
    align-items: center;
    justify-content: space-between;
    height: 28px;
    margin-top: 1px;
}

.stat-line + .stat-line {
    height: 26px;
    margin-top: 4px;
}

.coords {
    display: flex;
    align-items: center;
    width: 540px;
    margin-right: 0;
}

.c-ic {
    width: 20px;
    height: 24px;
    margin-right: 13px;
}

.c-abs {
    height: 18px;
    margin-right: 10px;
}

.ax {
    width: 16px;
}

.coord-in {
    flex: 0 0 72px;
    height: 22px;
    margin-right: 16px;
    background: #2a2a2a;
    border: 1px solid #262626;
}

.grid-val {
    white-space: nowrap;
    margin-left: -1px;
}

.tagline {
    display: flex;
    align-items: center;
    gap: 6px;
    width: 161px;
    margin-right: 0;
}

.tag-ic {
    width: 26px;
    height: 26px;
}

.transport {
    flex: 0 0 164px;
    padding-left: 5px;
}

.tr-row {
    display: flex;
    align-items: center;
    height: 28px;
    gap: 5.5px;
}

.tr-row2 {
    height: 26px;
    gap: 2px;
}

.tr {
    width: 20px;
    height: 18px;
}

.tr-play {
    height: 24px;
    margin: 0 1px;
}

.tr-sep {
    flex: 0 0 1px;
    height: 24px;
    background: #0d0d0d;
}

.tr-k {
    width: 18px;
    height: 14px;
    margin: 0 3px 0 2px;
}

.cfg {
    width: 22px;
    height: 24px;
    margin-left: 4px;
}

.frame-in {
    flex: 0 0 85px;
    height: 20px;
    display: flex;
    align-items: center;
    justify-content: space-between;
    padding: 0 5px;
    background: #303030;
    color: #666;
    font-size: 12px;
}

.updown {
    width: 6px;
    height: 14px;
    background:
        linear-gradient(45deg, transparent 50%, #666 50%) 0 0 / 3px 5px no-repeat,
        linear-gradient(-45deg, transparent 50%, #666 50%) 3px 0 / 3px 5px no-repeat,
        linear-gradient(135deg, transparent 50%, #666 50%) 3px 9px / 3px 5px no-repeat,
        linear-gradient(-135deg, transparent 50%, #666 50%) 0 9px / 3px 5px no-repeat;
}

.bigkey {
    flex: 0 0 53px;
    height: 54px;
    margin: 2px 0 0 0;
    display: flex;
    align-items: center;
    justify-content: center;
    background: #2e2e2e;
    border-radius: 5px;
}

.bigkey svg {
    width: 36px;
    height: 40px;
}

.key-btns {
    flex: 0 0 58px;
    margin: 2px 0 0 5px;
    display: flex;
    flex-direction: column;
    gap: 2px;
}

.key-btns span {
    height: 25px;
    text-align: center;
    line-height: 25px;
    background: #2e2e2e;
    border-radius: 4px;
    font-size: 12.5px;
    color: #6b6b6b;
}

.key-side {
    flex: 0 0 143px;
    margin: 2px 0 0 5px;
}

.sel-combo {
    height: 22px;
    background: #303030;
    padding-right: 7px;
    font-size: 13px;
    color: #696969;
}

.filter-row {
    display: flex;
    align-items: center;
    margin-top: 6px;
    margin-left: 3px;
}

.tan {
    width: 24px;
    height: 28px;
}

.filters {
    flex: 0 0 110px;
    height: 25px;
    margin-left: 4px;
    text-align: center;
    line-height: 25px;
    background: #303030;
    border-radius: 4px;
    font-size: 12.5px;
    color: #696969;
}

.nav-grid {
    flex: 0 0 112px;
    margin: 0 0 0 12px;
    display: grid;
    grid-template-columns: repeat(4, 28px);
    grid-auto-rows: 29px;
    align-items: center;
    justify-items: center;
}

.nav-grid svg {
    width: 23px;
    height: 23px;
}

/* windows taskbar, only the top edge is in the picture */
.taskbar {
    flex: 0 0 12px;
    display: flex;
    align-items: flex-end;
    overflow: hidden;
    background: #1b1b1b;
}

.tb-window {
    flex: 0 0 430px;
    height: 12px;
    margin-left: 60px;
    background: #f0f0f0;
    border-top: 1px solid #fff;
}

.tb-app {
    flex: 0 0 auto;
    height: 2px;
    border-radius: 6px 6px 0 0;
}

.cyan { width: 19px; margin-left: 145px; background: #1ec7d8; }
.white { width: 14px; margin-left: 107px; background: #ddd; }
.blue { width: 5px; margin-left: 52px; background: #1d76b8; }
.orange { width: 10px; margin-left: 60px; background: #a04a20; }
.red { width: 12px; margin-left: 51px; background: #c0504a; }

.tb-active {
    flex: 0 0 61px;
    height: 12px;
    margin-left: 19px;
    padding: 10px 15px 0;
    background: #555;
}

.tb-active i {
    display: block;
    height: 2px;
    background: #d8eef0;
}

.tb-clock {
    margin-left: 747px;
    height: 12px;
    padding-top: 6px;
    font-size: 12px;
    line-height: 16px;
    color: #fff;
}

.blackout {
    position: absolute;
    left: 188px;
    top: 106px;
    width: 1543px;
    height: 771px;
    background: #000;
}
```
